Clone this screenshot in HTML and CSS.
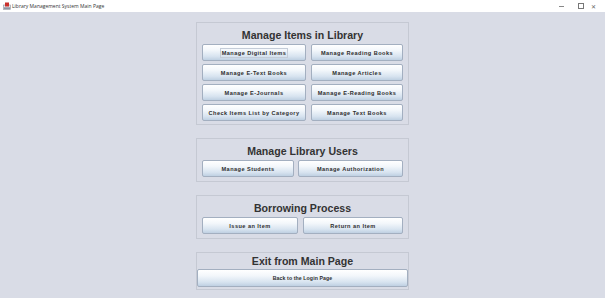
FILE: index.html
```html
<!DOCTYPE html>
<html lang="en">
<head>
    <meta charset="UTF-8">
    <meta name="viewport" content="width=device-width, initial-scale=1.0">
    <title>Library Management System Main Page</title>
    <link rel="stylesheet" href="styles.css">
</head>
<body>
    <div class="titlebar">
        <svg class="app-icon" width="8" height="8" viewBox="0 0 8 8">
            <rect x="0.5" y="3" width="7" height="4.5" fill="#e8e8ec" stroke="#8a8f9a" stroke-width="0.6"/>
            <rect x="2" y="0.5" width="4" height="4" fill="#c9302c"/>
            <rect x="1" y="5.5" width="6" height="1.2" fill="#6a7383"/>
        </svg>
        <span class="title">Library Management System Main Page</span>
        <div class="controls">
            <span class="ctl ctl-min"></span>
            <span class="ctl ctl-max"></span>
            <span class="ctl ctl-close">&#x2715;</span>
        </div>
    </div>

    <div class="main">
        <div class="panel panel-items">
            <h2>Manage Items in Library</h2>
            <div class="grid">
                <button class="btn"><span class="focus">Manage Digital Items</span></button>
                <button class="btn">Manage Reading Books</button>
                <button class="btn">Manage E-Text Books</button>
                <button class="btn">Manage Articles</button>
                <button class="btn">Manage E-Journals</button>
                <button class="btn">Manage E-Reading Books</button>
                <button class="btn">Check Items List by Category</button>
                <button class="btn">Manage Text Books</button>
            </div>
        </div>

        <div class="panel panel-users">
            <h2>Manage Library Users</h2>
            <div class="grid">
                <button class="btn">Manage Students</button>
                <button class="btn">Manage Authorization</button>
            </div>
        </div>

        <div class="panel panel-borrow">
            <h2>Borrowing Process</h2>
            <div class="grid">
                <button class="btn">Issue an Item</button>
                <button class="btn">Return an Item</button>
            </div>
        </div>

        <div class="panel panel-exit">
            <h2>Exit from Main Page</h2>
            <button class="btn btn-wide">Back to the Login Page</button>
        </div>
    </div>
</body>
</html>
```

FILE: styles.css
```css
body {
    margin: 0;
    height: 100vh;
    overflow: hidden;
    background-color: #d9dce6;
    font-family: "Liberation Sans", Arial, sans-serif;
}
.titlebar {
    display: flex;
    align-items: center;
    height: 12px;
    background-color: #ffffff;
    padding-left: 3px;
}
.app-icon {
    display: block;
}
.title {
    margin-left: 1px;
    font-family: "Open Sans", "Noto Sans", sans-serif;
    font-size: 5px;
    color: #333333;
}
.controls {
    display: flex;
    align-items: center;
    margin-left: auto;
    height: 12px;
}
.ctl {
    display: flex;
    align-items: center;
    justify-content: center;
    width: 20px;
    height: 12px;
    font-size: 6px;
    color: #666666;
}
.ctl-min::before {
    content: "";
    width: 5px;
    border-top: 1px solid #888888;
}
.ctl-max::before {
    content: "";
    width: 4px;
    height: 4px;
    border: 1px solid #777777;
}
.ctl-close {
    width: 14px;
    justify-content: flex-start;
}
.main {
    display: flex;
    flex-direction: column;
    align-items: center;
    gap: 13px;
    padding-top: 10px;
}
.panel {
    box-sizing: border-box;
    width: 213px;
    border: 1px solid #c5c9d3;
    padding: 0 5px 4px;
}
.panel-items {
    padding-bottom: 3px;
}
h2 {
    margin: 0;
    padding: 5px 0 2px;
    line-height: 14px;
    font-size: 10.6px;
    font-weight: bold;
    text-align: center;
    color: #333333;
}
.grid {
    display: grid;
    row-gap: 3px;
}
.panel-items .grid {
    grid-template-columns: 104px 92px;
    column-gap: 5px;
}
.panel-users .grid {
    grid-template-columns: 92px 105px;
    column-gap: 4px;
}
.panel-borrow .grid {
    grid-template-columns: 96px 100px;
    column-gap: 5px;
}
.btn {
    display: flex;
    align-items: center;
    justify-content: center;
    box-sizing: border-box;
    height: 17px;
    padding: 0;
    border: 1px solid #a3afc0;
    border-radius: 2px;
    background: linear-gradient(#ffffff 0%, #f3f7fb 35%, #d8e4f0 75%, #bfd0e2 100%);
    font-family: "Liberation Sans", Arial, sans-serif;
    font-size: 5.6px;
    font-weight: bold;
    letter-spacing: 0.45px;
    color: #2e2e2e;
    white-space: nowrap;
}
.focus {
    padding: 1px 1px;
    border: 1px solid #c4ccd8;
}
.panel-exit {
    padding: 0 0 2px;
}
.panel-exit h2 {
    padding: 1px 0 1px;
}
.btn-wide {
    width: 100%;
    height: 18px;
    font-size: 5.2px;
    letter-spacing: 0.1px;
}
```
